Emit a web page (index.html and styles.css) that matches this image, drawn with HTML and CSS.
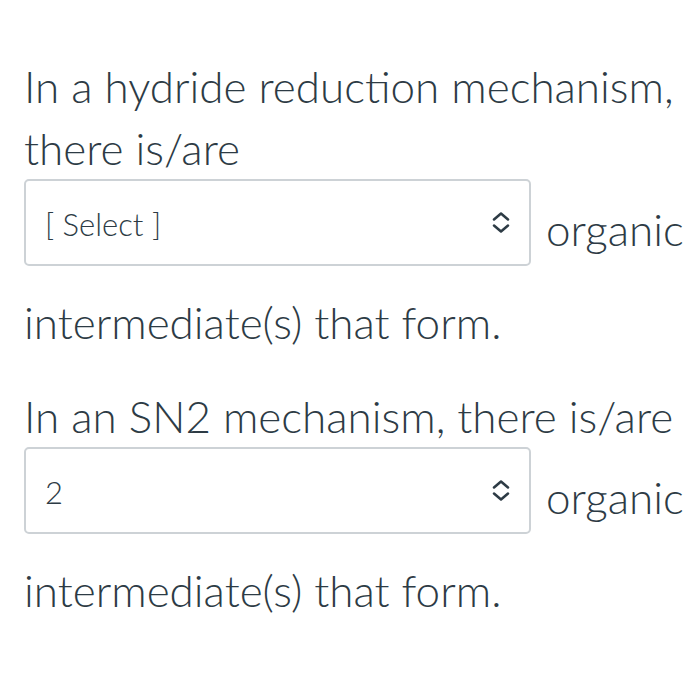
FILE: index.html
```html
<!DOCTYPE html>
<html lang="en">
<head>
    <meta charset="UTF-8">
    <meta name="viewport" content="width=device-width, initial-scale=1.0">
    <title>Quiz Question</title>
    <link rel="stylesheet" href="styles.css">
</head>
<body>
    <div class="question">
        <p>In a hydride reduction mechanism, there is/are
            <span class="select">
                <span class="select-value">[ Select ]</span>
                <svg class="select-arrow" viewBox="0 0 20 21" width="20" height="21">
                    <path d="M3 7.5 L10 1.5 L17 7.5 M3 13.5 L10 19.5 L17 13.5" fill="none" stroke="#2d3b45" stroke-width="2.5" stroke-linecap="round" stroke-linejoin="round"/>
                </svg>
            </span>
            organic intermediate(s) that form.</p>

        <p>In an SN2 mechanism, there is/are
            <span class="select">
                <span class="select-value">2</span>
                <svg class="select-arrow" viewBox="0 0 20 21" width="20" height="21">
                    <path d="M3 7.5 L10 1.5 L17 7.5 M3 13.5 L10 19.5 L17 13.5" fill="none" stroke="#2d3b45" stroke-width="2.5" stroke-linecap="round" stroke-linejoin="round"/>
                </svg>
            </span>
            organic intermediate(s) that form.</p>
    </div>
</body>
</html>
```

FILE: styles.css
```css
body {
    margin: 0;
    background: #fff;
    font-family: Lato, "Open Sans", sans-serif;
    font-weight: 300;
    color: #2d3b45;
}
.question {
    width: 660px;
    padding: 55px 16px 0 24px;
}
.question p {
    margin: 0 0 32px;
    font-size: 44px;
    line-height: 62px;
}
.select {
    display: inline-flex;
    align-items: center;
    justify-content: space-between;
    box-sizing: border-box;
    width: 507px;
    height: 87px;
    margin: 0 3px 25px 0;
    padding: 0 18px 0 19px;
    border: 2px solid #cdd2d6;
    border-radius: 5px;
    vertical-align: middle;
    background: #fff;
}
.select-value {
    padding-top: 4px;
    font-size: 31px;
    line-height: 1;
    color: #2d3b45;
}
.select-arrow {
    display: block;
}
```
